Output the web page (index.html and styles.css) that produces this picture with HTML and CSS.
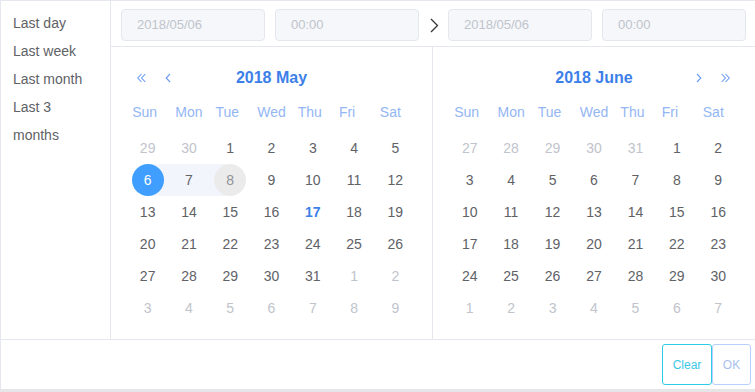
FILE: index.html
```html
<!DOCTYPE html>
<html>
<head>
<meta charset="utf-8">
<link rel="stylesheet" href="styles.css">
</head>
<body>
<div class="panel">
  <div class="top">
    <ul class="sidebar">
      <li>Last day</li>
      <li>Last week</li>
      <li>Last month</li>
      <li>Last 3 months</li>
    </ul>
    <div class="main">
      <div class="head">
        <div class="inp">2018/05/06</div>
        <div class="inp gap">00:00</div>
        <div class="sep"><svg width="10" height="15" viewBox="0 0 10 15"><path d="M2 1 L8.5 7.5 L2 14" fill="none" stroke="#333" stroke-width="1.3"/></svg></div>
        <div class="inp">2018/05/06</div>
        <div class="inp gap">00:00</div>
      </div>
      <div class="cals">
        <div class="cal left">
          <div class="mhead">
            <div class="nav navl">
              <svg width="9" height="10" viewBox="0 0 9 10"><path d="M4.5 1 L0.8 5 L4.5 9 M8.3 1 L4.6 5 L8.3 9" fill="none" stroke="#6a9cf5" stroke-width="1.1"/></svg>
              <svg width="6" height="10" viewBox="0 0 6 10"><path d="M5 1 L1.2 5 L5 9" fill="none" stroke="#6a9cf5" stroke-width="1.1"/></svg>
            </div>
            <div class="title">2018 May</div>
            <div></div>
          </div>
          <div class="wk"><span>Sun</span><span>Mon</span><span>Tue</span><span>Wed</span><span>Thu</span><span>Fri</span><span>Sat</span></div>
          <div class="days">
            <div class="d o"><span>29</span></div><div class="d o"><span>30</span></div><div class="d"><span>1</span></div><div class="d"><span>2</span></div><div class="d"><span>3</span></div><div class="d"><span>4</span></div><div class="d"><span>5</span></div>
            <div class="d start"><span>6</span></div><div class="d inr"><span>7</span></div><div class="d end"><span>8</span></div><div class="d"><span>9</span></div><div class="d"><span>10</span></div><div class="d"><span>11</span></div><div class="d"><span>12</span></div>
            <div class="d"><span>13</span></div><div class="d"><span>14</span></div><div class="d"><span>15</span></div><div class="d"><span>16</span></div><div class="d today"><span>17</span></div><div class="d"><span>18</span></div><div class="d"><span>19</span></div>
            <div class="d"><span>20</span></div><div class="d"><span>21</span></div><div class="d"><span>22</span></div><div class="d"><span>23</span></div><div class="d"><span>24</span></div><div class="d"><span>25</span></div><div class="d"><span>26</span></div>
            <div class="d"><span>27</span></div><div class="d"><span>28</span></div><div class="d"><span>29</span></div><div class="d"><span>30</span></div><div class="d"><span>31</span></div><div class="d o"><span>1</span></div><div class="d o"><span>2</span></div>
            <div class="d o"><span>3</span></div><div class="d o"><span>4</span></div><div class="d o"><span>5</span></div><div class="d o"><span>6</span></div><div class="d o"><span>7</span></div><div class="d o"><span>8</span></div><div class="d o"><span>9</span></div>
          </div>
        </div>
        <div class="cal right">
          <div class="mhead">
            <div></div>
            <div class="title">2018 June</div>
            <div class="nav navr">
              <svg width="6" height="10" viewBox="0 0 6 10"><path d="M1 1 L4.8 5 L1 9" fill="none" stroke="#6a9cf5" stroke-width="1.1"/></svg>
              <svg width="9" height="10" viewBox="0 0 9 10"><path d="M0.7 1 L4.4 5 L0.7 9 M4.5 1 L8.2 5 L4.5 9" fill="none" stroke="#6a9cf5" stroke-width="1.1"/></svg>
            </div>
          </div>
          <div class="wk"><span>Sun</span><span>Mon</span><span>Tue</span><span>Wed</span><span>Thu</span><span>Fri</span><span>Sat</span></div>
          <div class="days">
            <div class="d o"><span>27</span></div><div class="d o"><span>28</span></div><div class="d o"><span>29</span></div><div class="d o"><span>30</span></div><div class="d o"><span>31</span></div><div class="d"><span>1</span></div><div class="d"><span>2</span></div>
            <div class="d"><span>3</span></div><div class="d"><span>4</span></div><div class="d"><span>5</span></div><div class="d"><span>6</span></div><div class="d"><span>7</span></div><div class="d"><span>8</span></div><div class="d"><span>9</span></div>
            <div class="d"><span>10</span></div><div class="d"><span>11</span></div><div class="d"><span>12</span></div><div class="d"><span>13</span></div><div class="d"><span>14</span></div><div class="d"><span>15</span></div><div class="d"><span>16</span></div>
            <div class="d"><span>17</span></div><div class="d"><span>18</span></div><div class="d"><span>19</span></div><div class="d"><span>20</span></div><div class="d"><span>21</span></div><div class="d"><span>22</span></div><div class="d"><span>23</span></div>
            <div class="d"><span>24</span></div><div class="d"><span>25</span></div><div class="d"><span>26</span></div><div class="d"><span>27</span></div><div class="d"><span>28</span></div><div class="d"><span>29</span></div><div class="d"><span>30</span></div>
            <div class="d o"><span>1</span></div><div class="d o"><span>2</span></div><div class="d o"><span>3</span></div><div class="d o"><span>4</span></div><div class="d o"><span>5</span></div><div class="d o"><span>6</span></div><div class="d o"><span>7</span></div>
          </div>
        </div>
      </div>
    </div>
  </div>
  <div class="foot">
    <button class="btn clear">Clear</button><button class="btn ok">OK</button>
  </div>
</div>
</body>
</html>
```

FILE: styles.css
```css
* { box-sizing: border-box; }
html, body { margin: 0; padding: 0; }
body {
  background: #e6e6e9;
  font-family: "Liberation Sans", Arial, sans-serif;
  width: 755px;
  height: 392px;
}
.panel {
  width: 755px;
  height: 389px;
  background: #fff;
  border-left: 1px solid #e4e7ed;
  border-top: 1px solid #e4e7ed;
  display: flex;
  flex-direction: column;
}
.top {
  display: flex;
  height: 338px;
}
.sidebar {
  list-style: none;
  margin: 0;
  padding: 8px 12px 0 12px;
  width: 110px;
  border-right: 1px solid #e4e7ed;
  font-size: 14px;
  line-height: 28px;
  color: #606266;
}
.sidebar li { margin: 0; }
.main {
  width: 644px;
  display: flex;
  flex-direction: column;
}
.head {
  height: 46px;
  border-bottom: 1px solid #e4e7ed;
  padding: 8px 9px 0 10px;
  display: flex;
  align-items: flex-start;
}
.inp {
  width: 144px;
  height: 32px;
  background: #f5f7fa;
  border: 1px solid #e4e7ed;
  border-radius: 4px;
  color: #c0c4cc;
  font-size: 13px;
  line-height: 30px;
  padding-left: 15px;
}
.inp.gap { margin-left: 10px; }
.sep {
  width: 29px;
  height: 32px;
  padding-top: 1px;
  display: flex;
  align-items: center;
  justify-content: center;
}
.cals {
  display: flex;
  height: 292px;
}
.cal {
  width: 322px;
  padding: 15px 16px 0 16px;
}
.cal.left { border-right: 1px solid #e4e7ed; }
.mhead {
  height: 32px;
  display: grid;
  grid-template-columns: 1fr auto 1fr;
  align-items: center;
}
.title {
  font-size: 16px;
  font-weight: bold;
  color: #3d7fe9;
}
.nav {
  display: flex;
  align-items: center;
  gap: 19px;
}
.nav svg { display: block; }
.navl { padding-left: 10px; }
.navr { justify-content: flex-end; padding-right: 9px; }
.wk {
  margin-top: 2px;
  height: 32px;
  display: grid;
  grid-template-columns: repeat(7, 1fr);
  align-items: center;
  font-size: 14px;
  color: #94b6f4;
}
.wk span { text-align: center; padding-right: 6px; }
.wk span:nth-child(2) { padding-right: 0; }
.wk span:nth-child(4) { padding-right: 0; }
.wk span:nth-child(6) { padding-right: 14px; }
.wk span:nth-child(7) { padding-right: 10px; }
.days {
  margin-top: 4px;
  display: grid;
  grid-template-columns: repeat(7, 1fr);
  grid-auto-rows: 32px;
  font-size: 14px;
  color: #606266;
}
.d {
  display: flex;
  align-items: center;
  justify-content: center;
}
.d span {
  width: 32px;
  height: 32px;
  line-height: 32px;
  text-align: center;
  border-radius: 50%;
}
.d.o { color: #c0c4cc; }
.d.today { color: #3d7fe9; font-weight: bold; }
.d.start { background: linear-gradient(to right, transparent 50%, #f2f6fc 50%); }
.d.start span { background: #409eff; color: #fff; }
.d.inr { background: #f2f6fc; }
.d.end { background: linear-gradient(to right, #f2f6fc 50%, transparent 50%); }
.d.end span { background: #ebebeb; color: #909399; }
.foot {
  height: 50px;
  border-top: 1px solid #e4e7ed;
  display: flex;
  justify-content: flex-end;
  padding: 4px 4px 4px 0;
}
.btn {
  height: 41px;
  background: #fff;
  border-radius: 3px;
  font-family: "Liberation Sans", Arial, sans-serif;
  font-size: 12px;
  padding: 0;
  margin: 0;
}
.btn.clear {
  width: 50px;
  border: 1px solid #2ecbe6;
  color: #3cc7e6;
}
.btn.ok {
  width: 39px;
  border: 1px solid #b6d0ff;
  color: #a8c1ef;
}
```
